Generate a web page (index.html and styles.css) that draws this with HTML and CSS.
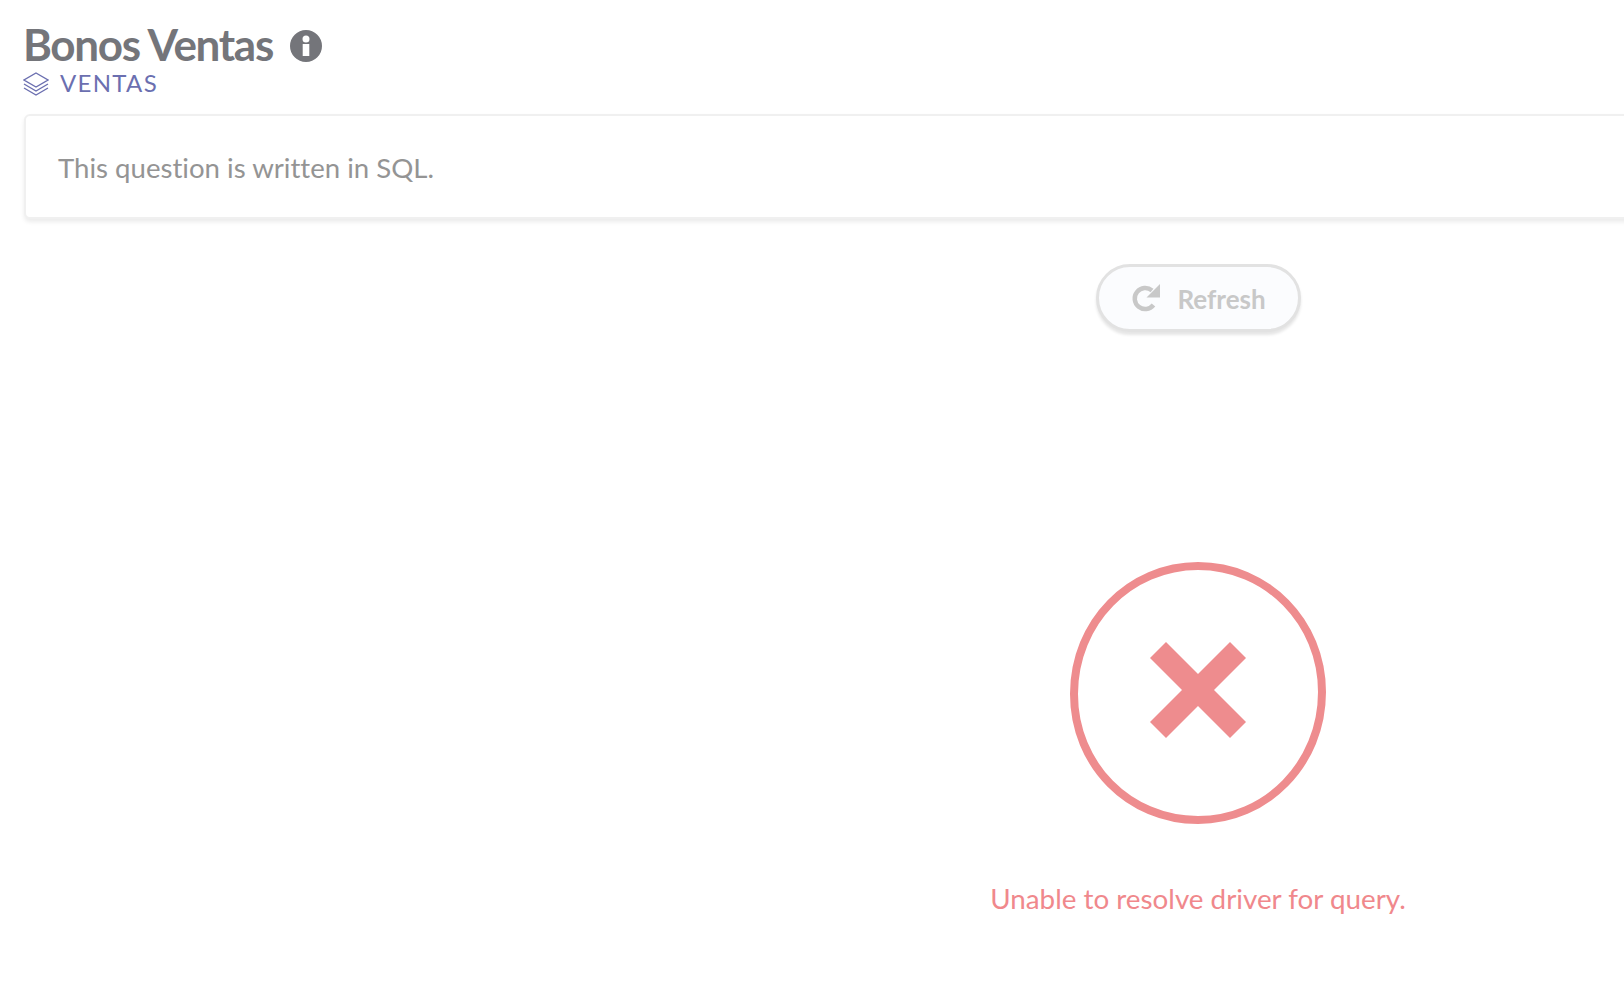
FILE: index.html
```html
<!DOCTYPE html>
<html lang="en">
<head>
    <meta charset="UTF-8">
    <meta name="viewport" content="width=device-width, initial-scale=1.0">
    <title>Bonos Ventas</title>
    <link rel="stylesheet" href="styles.css">
</head>
<body>
    <div class="page">
        <div class="title-row">
            <h1>Bonos Ventas</h1>
            <svg class="info-icon" viewBox="0 0 32 32">
                <path fill-rule="evenodd" d="M16 0a16 16 0 1 0 0 32 16 16 0 0 0 0-32zm0 5.500a3.500 3.500 0 1 1 0 7a3.500 3.500 0 0 1 0-7zM12.700 14h6.600v12h-6.600z"/>
            </svg>
        </div>
        <div class="collection">
            <svg class="layers-icon" viewBox="0 0 26 24">
                <path d="M13 1 25 8 13 15 1 8z"/>
                <path d="M1 12 13 19 25 12"/>
                <path d="M1 16 13 23 25 16"/>
            </svg>
            <span>VENTAS</span>
        </div>
        <div class="card">This question is written in SQL.</div>
        <div class="result">
            <button class="refresh" type="button">
                <svg class="refresh-icon" viewBox="0 0 28 28">
                    <path class="arc" d="M21.500 21A10.500 10.500 0 1 1 20 6.500"/>
                    <path class="head" d="M28 0v13.500H14.500z"/>
                </svg>
                <span class="refresh-label">Refresh</span>
            </button>
            <svg class="error-icon" viewBox="0 0 256 262">
                <path class="ring" d="M128 4C197 4 252 60 252 130C252 202 196 258 128 258C59 258 4 203 4 132C4 60 60 4 128 4z"/>
                <path class="cross" d="M96 80 128 112 160 80 176 96 144 128 176 160 160 176 128 144 96 176 80 160 112 128 80 96z"/>
            </svg>
            <p class="error-text">Unable to resolve driver for query.</p>
        </div>
    </div>
</body>
</html>
```

FILE: styles.css
```css
html, body {
    margin: 0;
    overflow: hidden;
    height: 998px;
    background-color: #fff;
}
body {
    font-family: Lato, sans-serif;
    font-variant-ligatures: none;
}
.page {
    width: 2348px;
    padding: 24px 0 0 24px;
}
.title-row {
    display: flex;
    align-items: center;
    gap: 17px;
    height: 42px;
}
h1 {
    margin: -2px 0 0 -1px;
    font-size: 44px;
    font-weight: 700;
    letter-spacing: -1.300px;
    color: #74757a;
}
.info-icon {
    width: 32px;
    height: 32px;
    margin-top: 1px;
    fill: #74757a;
}
.collection {
    display: flex;
    align-items: center;
    gap: 11px;
    height: 30px;
    margin-top: 1px;
    font-size: 24px;
    letter-spacing: 1.300px;
    color: #6b6fb0;
}
.layers-icon {
    width: 26px;
    height: 24px;
    margin: 3px 0 0 -1px;
    fill: none;
    stroke: #6b6fb0;
    stroke-width: 1.400;
}
.card {
    box-sizing: border-box;
    height: 105px;
    margin-top: 17px;
    padding: 2px 32px 0;
    display: flex;
    align-items: center;
    background-color: #fff;
    border: 2px solid #f0f0f0;
    border-radius: 6px;
    box-shadow: 0 3px 4px rgba(0,0,0,0.08);
    font-size: 27.600px;
    color: #949494;
}
.result {
    display: flex;
    flex-direction: column;
    align-items: center;
}
.refresh {
    display: flex;
    align-items: center;
    gap: 18px;
    box-sizing: border-box;
    width: 205px;
    height: 68px;
    margin-top: 45px;
    padding: 0 0 0 33px;
    background-color: #fbfcfe;
    border: 3px solid #e2e2e2;
    border-radius: 34px;
    box-shadow: 0 3px 3px rgba(0,0,0,0.1);
    font-family: Lato, sans-serif;
    font-size: 26px;
    font-weight: 700;
    color: #c8c8c8;
}
.refresh-label {
    margin-top: 2px;
}
.refresh-icon {
    width: 28px;
    height: 28px;
    overflow: visible;
}
.refresh-icon .arc {
    fill: none;
    stroke: #c8c8c8;
    stroke-width: 4.500;
}
.refresh-icon .head {
    fill: #c8c8c8;
}
.error-icon {
    width: 256px;
    height: 262px;
    margin-top: 230px;
}
.error-icon .ring {
    fill: none;
    stroke: #ee8c8e;
    stroke-width: 8;
}
.error-icon .cross {
    fill: #ee8c8e;
}
.error-text {
    margin: 58px 0 0;
    font-size: 27.800px;
    color: #f0888c;
}
```
